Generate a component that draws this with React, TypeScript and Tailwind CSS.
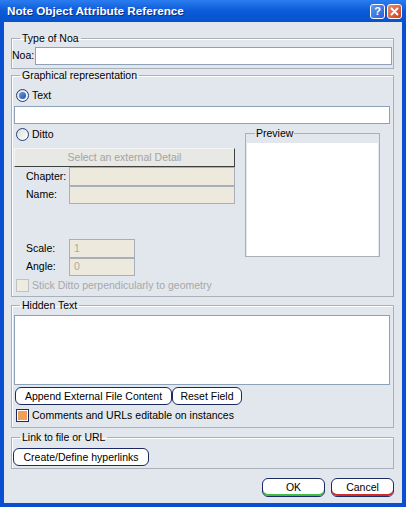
import React from "react";

const FONT = "font-['Liberation_Sans',Arial,sans-serif]";

function Radio({ checked }: { checked?: boolean }) {
  return (
    <span className="relative inline-flex h-[13px] w-[13px] shrink-0 items-center justify-center rounded-full border border-[#1c3f7a] bg-gradient-to-br from-[#dcdcd6] to-white">
      {checked && <span className="h-[7px] w-[7px] rounded-full bg-gradient-to-br from-[#6f9ae8] to-[#1e4eb8]" />}
    </span>
  );
}

function Group({ title, className, children }: { title: string; className?: string; children: React.ReactNode }) {
  return (
    <fieldset className={`border border-[#a9b0b8] shadow-[inset_1px_1px_0_#ffffff] ${className ?? ""}`}>
      <legend className="ml-[8px] px-[2px] leading-[13px]">{title}</legend>
      {children}
    </fieldset>
  );
}

function PillButton({ label, className }: { label: string; className?: string }) {
  return (
    <button className={`flex items-center justify-center rounded-[6px] border border-[#1b2a63] bg-white leading-none ${className ?? ""}`}>
      {label}
    </button>
  );
}

export default function App() {
  return (
    <div className={`flex h-[507px] w-[406px] flex-col bg-[#0a4fd2] text-[10.5px] text-black ${FONT}`}>
      {/* Title bar */}
      <div className="flex h-[22px] shrink-0 items-center bg-gradient-to-b from-[#2b7cf0] via-[#0b5ad8] to-[#0853cc] pl-[7px] pr-[4px]">
        <span className="flex-1 text-[11.7px] font-bold text-white [text-shadow:1px_1px_0_#0b2f8a]">Note Object Attribute Reference</span>
        <div className="flex gap-[2px]">
          <span className="flex h-[15px] w-[15px] items-center justify-center rounded-[3px] border border-white bg-gradient-to-br from-[#5c97f5] to-[#2560d8] text-[11px] font-bold leading-none text-white">?</span>
          <span className="flex h-[15px] w-[15px] items-center justify-center rounded-[3px] border border-white bg-gradient-to-br from-[#f08a66] to-[#cf3a18]">
            <svg width="9" height="9" viewBox="0 0 9 9">
              <path d="M1.5 1.5 L7.5 7.5 M7.5 1.5 L1.5 7.5" stroke="white" strokeWidth="1.8" strokeLinecap="round" />
            </svg>
          </span>
        </div>
      </div>

      {/* Body */}
      <div className="mx-[4px] mb-[4px] flex flex-1 flex-col bg-[#e2e7ed] pl-[7px] pr-[8px]">
        {/* Type of Noa */}
        <Group title="Type of Noa" className="mt-[10px] pr-[1px] pt-[2px] pb-[3px]">
          <div className="flex h-[18px] items-center">
            <span className="w-[23px]">Noa:</span>
            <div className="h-[18px] flex-1 border border-[#8da2b8] bg-white" />
          </div>
        </Group>

        {/* Graphical representation */}
        <Group title="Graphical representation" className="pb-[4px]">
          <div className="mt-[7px] flex h-[13px] items-center gap-[3px] pl-[4px]">
            <Radio checked />
            <span>Text</span>
          </div>
          <div className="ml-[2px] mr-[3px] mt-[4px] h-[18px] border border-[#8da2b8] bg-white" />
          <div className="flex">
            <div className="w-[223px]">
              <div className="mt-[4px] flex h-[13px] items-center gap-[3px] pl-[4px]">
                <Radio />
                <span>Ditto</span>
              </div>
              <button className="ml-[2px] mt-[7px] flex h-[19px] w-[221px] items-center justify-center border border-b-[#404040] border-l-[#f4f4f4] border-r-[#404040] border-t-[#f4f4f4] bg-[#e8e8e4] text-[#a4a4a4]">
                Select an external Detail
              </button>
              <div className="flex h-[19px] items-center">
                <span className="w-[57px] pl-[14px]">Chapter:</span>
                <div className="h-[19px] flex-1 border border-[#a7b0ba] bg-[#ede9dd]" />
              </div>
              <div className="flex h-[18px] items-center">
                <span className="w-[57px] pl-[14px]">Name:</span>
                <div className="h-[18px] flex-1 border border-[#a7b0ba] bg-[#ede9dd]" />
              </div>
              <div className="mt-[35px] flex h-[19px] items-center">
                <span className="w-[57px] pl-[14px]">Scale:</span>
                <div className="flex h-[19px] w-[66px] items-center border border-[#a7b0ba] bg-[#ede9dd] pl-[4px] text-[#b0aa98]">1</div>
              </div>
              <div className="flex h-[18px] items-center">
                <span className="w-[57px] pl-[14px]">Angle:</span>
                <div className="flex h-[18px] w-[66px] items-center border border-[#a7b0ba] bg-[#ede9dd] pl-[4px] text-[#b0aa98]">0</div>
              </div>
            </div>
            <fieldset className="ml-[10px] mt-[3px] h-[130px] w-[135px] border border-[#a9b0b8] px-[1px] pb-[1px] pt-[3px]">
              <legend className="ml-[8px] px-[1px] leading-[13px]">Preview</legend>
              <div className="h-[113px] bg-white" />
            </fieldset>
          </div>
          <div className="mt-[3px] flex h-[13px] items-center gap-[3px] pl-[4px] text-[#a8a8a8]">
            <span className="h-[13px] w-[13px] border border-[#c2c2bc] bg-[#eeebe0]" />
            <span>Stick Ditto perpendicularly to geometry</span>
          </div>
        </Group>

        {/* Hidden Text */}
        <Group title="Hidden Text" className="mt-[2px] pb-[5px]">
          <div className="ml-[2px] mr-[3px] mt-[3px] h-[70px] border border-[#8da2b8] bg-white" />
          <div className="ml-[3px] mt-[2px] flex h-[18px]">
            <PillButton label="Append External File Content" className="h-[18px] w-[157px]" />
            <PillButton label="Reset Field" className="h-[18px] w-[70px]" />
          </div>
          <div className="mt-[4px] flex h-[13px] items-center gap-[3px] pl-[4px]">
            <span className="flex h-[13px] w-[13px] items-center justify-center border border-[#1c2a5e] bg-white">
              <span className="h-[9px] w-[9px] bg-[#f2a055]" />
            </span>
            <span>Comments and URLs editable on instances</span>
          </div>
        </Group>

        {/* Link to file or URL */}
        <Group title="Link to file or URL" className="mt-[3px] pb-[2px]">
          <div className="ml-[1px] mt-[4px] flex">
            <PillButton label="Create/Define hyperlinks" className="h-[18px] w-[136px]" />
          </div>
        </Group>

        {/* OK / Cancel */}
        <div className="mt-[9px] flex justify-end gap-[6px]">
          <button className="flex h-[19px] w-[63px] items-center justify-center rounded-[6px] border border-[#1b2a63] bg-white shadow-[inset_0_-2px_0_#3fbf3f]">
            OK
          </button>
          <button className="flex h-[19px] w-[63px] items-center justify-center rounded-[6px] border border-[#1b2a63] bg-white shadow-[inset_0_-2px_0_#d42a2a]">
            Cancel
          </button>
        </div>
      </div>
    </div>
  );
}
